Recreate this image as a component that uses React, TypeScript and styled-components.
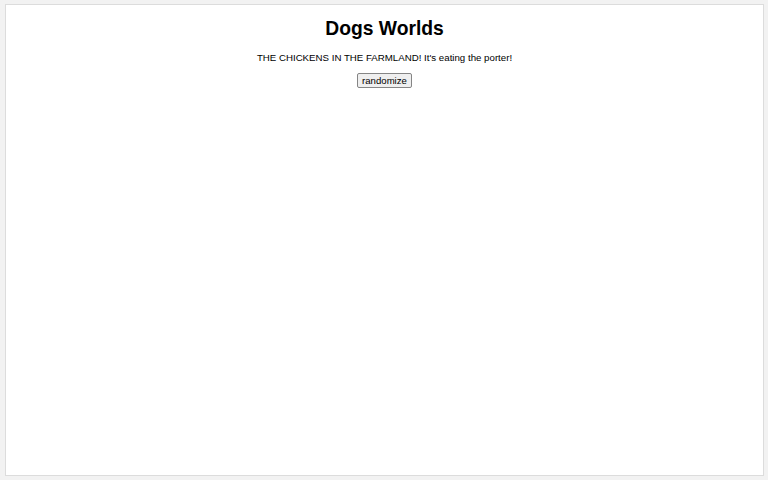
import styled, { createGlobalStyle } from "styled-components";

const GlobalStyle = createGlobalStyle`
    html, body {
        margin: 0;
        padding: 0;
        background: #f2f2f2;
        font-family: "Liberation Sans", Arial, sans-serif;
    }
`;

const Page = styled.div`
    padding: 4px 4px 4px 5px;
    height: 480px;
    box-sizing: border-box;
`;

const Card = styled.main`
    height: 100%;
    box-sizing: border-box;
    background: #fff;
    border: 1px solid #dcdcdc;
    display: flex;
    flex-direction: column;
    align-items: center;
    padding-top: 13px;
`;

const Title = styled.h1`
    margin: 0;
    font-size: 19.3px;
    font-weight: bold;
    line-height: 22px;
    color: #000;
`;

const Phrase = styled.p`
    margin: 12px 0 0;
    font-size: 9.7px;
    line-height: 11px;
    color: #000;
`;

const Button = styled.button`
    margin-top: 10px;
    font-family: "Liberation Sans", Arial, sans-serif;
    font-size: 9.6px;
    line-height: 11px;
    padding: 1px 4px;
    background: #efefef;
    border: 1px solid #858585;
    border-radius: 2px;
    color: #000;
`;

const App = () => {
    return (
        <>
            <GlobalStyle />
            <Page>
                <Card>
                    <Title>Dogs Worlds</Title>
                    <Phrase>THE CHICKENS IN THE FARMLAND! It's eating the porter!</Phrase>
                    <Button>randomize</Button>
                </Card>
            </Page>
        </>
    );
};

export default App;
